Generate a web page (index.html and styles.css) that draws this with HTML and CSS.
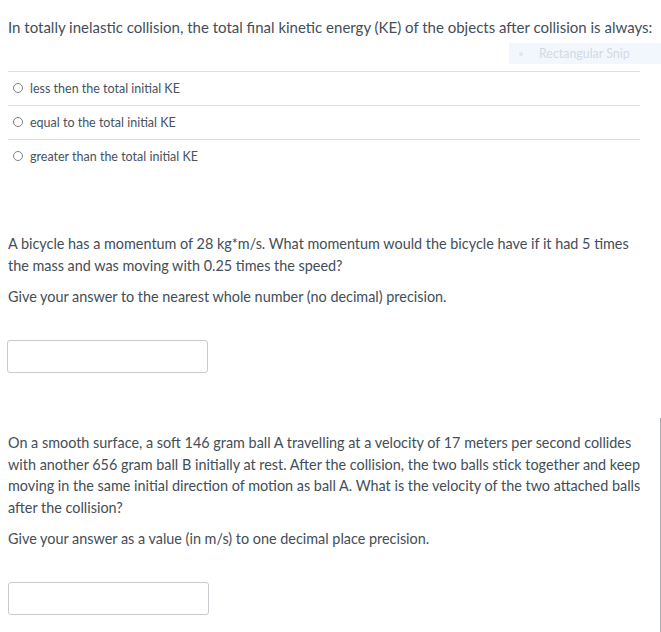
FILE: index.html
```html
<!DOCTYPE html>
<html>
<head>
<meta charset="utf-8">
<link rel="stylesheet" href="styles.css">
</head>
<body>
<section class="question q1">
  <p class="prompt">In totally inelastic collision, the total final kinetic energy (KE) of the objects after collision is always:</p>
  <ul class="answers">
    <li class="answer"><span class="radio"></span><span>less then the total initial KE</span></li>
    <li class="answer"><span class="radio"></span><span>equal to the total initial KE</span></li>
    <li class="answer"><span class="radio"></span><span>greater than the total initial KE</span></li>
  </ul>
  <div class="snip"><span class="snip-dot"></span><span>Rectangular Snip</span></div>
</section>
<section class="question q2">
  <p class="text">A bicycle has a momentum of 28 kg*m/s. What momentum would the bicycle have if it had 5 times<br>the mass and was moving with 0.25 times the speed?</p>
  <p class="text hint">Give your answer to the nearest whole number (no decimal) precision.</p>
  <div class="input"></div>
</section>
<section class="question q3">
  <p class="text">On a smooth surface, a soft 146 gram ball A travelling at a velocity of 17 meters per second collides<br>with another 656 gram ball B initially at rest. After the collision, the two balls stick together and keep<br>moving in the same initial direction of motion as ball A. What is the velocity of the two attached balls<br>after the collision?</p>
  <p class="text hint">Give your answer as a value (in m/s) to one decimal place precision.</p>
  <div class="input"></div>
</section>
</body>
</html>
```
FILE: styles.css
```css
html, body {
  margin: 0;
  padding: 0;
  background: #ffffff;
}
body {
  font-family: Lato, "Open Sans", sans-serif;
  color: #434e58;
  width: 661px;
  height: 632px;
  overflow: hidden;
}
.question {
  position: relative;
}
.q1 {
  padding: 17px 0 0 8px;
}
.prompt {
  margin: 0;
  font-size: 15px;
  line-height: 20px;
}
.answers {
  list-style: none;
  margin: 34px 0 0 0;
  padding: 0;
  width: 632px;
}
.answer {
  display: flex;
  align-items: center;
  gap: 7px;
  padding-bottom: 1px;
  box-sizing: border-box;
  height: 34px;
  border-top: 1px solid #dcdfe2;
  padding-left: 5px;
  font-size: 12.5px;
  color: #47525c;
}
.radio {
  width: 8px;
  height: 8px;
  border: 1px solid #7a8188;
  border-radius: 50%;
  flex: none;
}
.snip {
  position: absolute;
  left: 509px;
  top: 43px;
  width: 152px;
  height: 21px;
  background: #f2f7fd;
  display: flex;
  align-items: center;
  gap: 16px;
  padding-left: 10px;
  box-sizing: border-box;
  font-size: 12.4px;
  color: #d0dae6;
}
.snip-dot {
  width: 4px;
  height: 4px;
  border-radius: 50%;
  background: #dde6f0;
}
.q2 {
  padding: 60px 0 0 8px;
}
.text {
  margin: 0;
  font-size: 14.4px;
  line-height: 22px;
}
.hint {
  margin-top: 9px;
}
.input {
  width: 199px;
  height: 31px;
  border: 1px solid #c7cbcf;
  border-radius: 3px;
  margin-top: 32px;
  margin-left: -1px;
}
.q3 {
  margin-top: 45px;
  padding: 14px 0 17px 8px;
  border-right: 1px solid #a9acaf;
  box-sizing: border-box;
  width: 661px;
}
.q3 .text {
  line-height: 21.5px;
}
.q3 .hint {
  margin-top: 10px;
}
.q3 .input {
  margin-left: 0;
}
```
